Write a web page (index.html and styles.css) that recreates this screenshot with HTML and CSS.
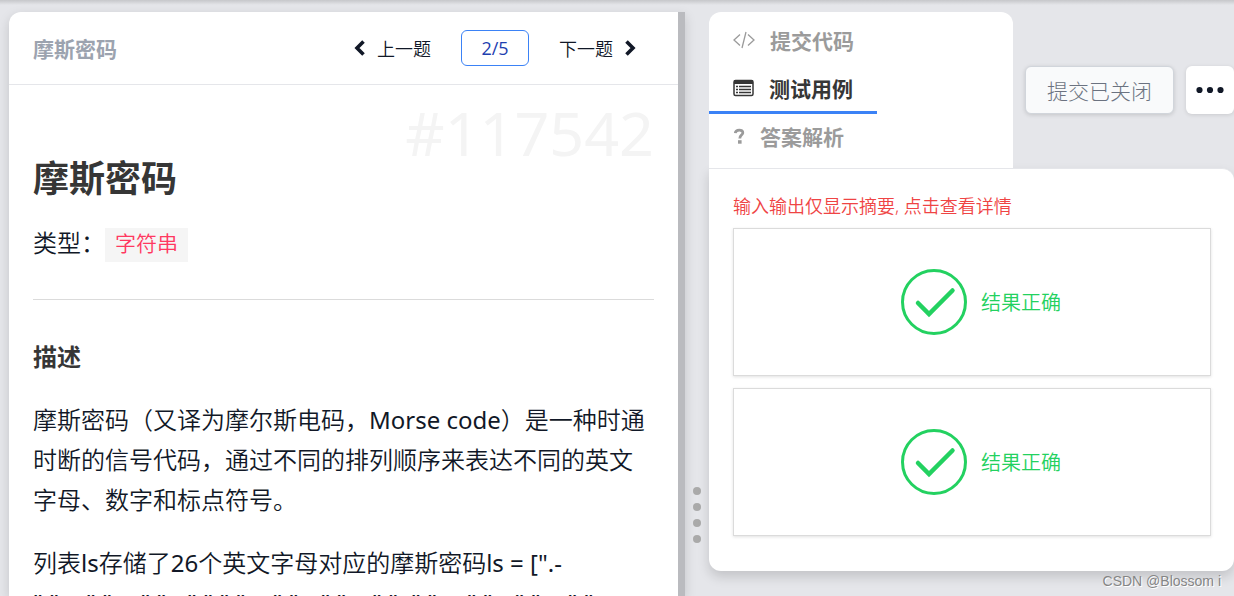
FILE: index.html
```html
<!DOCTYPE html>
<html lang="zh-CN">
<head>
<meta charset="utf-8">
<meta name="viewport" content="width=device-width, initial-scale=1">
<title>摩斯密码</title>
<link rel="stylesheet" href="styles.css">
</head>
<body>
<div class="workspace">
  <section class="problem">
    <header class="problem-bar">
      <span class="problem-name">摩斯密码</span>
      <nav class="pager">
        <button class="pager-link" type="button">
          <svg width="11" height="16" viewBox="0 0 11 16"><path d="M9.500 1.500 3 8l6.500 6.500" fill="none" stroke="currentColor" stroke-width="3.600"/></svg>
          上一题
        </button>
        <button class="pager-count" type="button">2/5</button>
        <button class="pager-link" type="button">
          下一题
          <svg width="11" height="16" viewBox="0 0 11 16"><path d="M1.500 1.500 8 8l-6.500 6.500" fill="none" stroke="currentColor" stroke-width="3.600"/></svg>
        </button>
      </nav>
    </header>
    <article class="problem-body">
      <span class="problem-id">#117542</span>
      <h1 class="title">摩斯密码</h1>
      <div class="meta"><span class="meta-label">类型：</span><span class="tag">字符串</span></div>
      <hr class="rule">
      <h2 class="subtitle">描述</h2>
      <p class="text">摩斯密码（又译为摩尔斯电码，Morse code）是一种时通时断的信号代码，通过不同的排列顺序来表达不同的英文字母、数字和标点符号。</p>
      <p class="text">列表ls存储了26个英文字母对应的摩斯密码ls = [".-<wbr>","-...","-.-.","-..",".","..-.","--.","....","..",".---","-.-",".-..","</p>
    </article>
  </section>
  <div class="splitter"><i class="dot"></i><i class="dot"></i><i class="dot"></i><i class="dot"></i></div>
  <section class="results">
    <div class="toolbar">
      <div class="tabs" role="tablist">
        <button class="tab" type="button" role="tab">
          <svg width="22" height="18" viewBox="0 0 22 18" fill="none" stroke="currentColor" stroke-width="1.300"><path d="M7 3.500 1 9l6 5.500M15 3.500 21 9l-6 5.500M13 1 9 17"/></svg>
          提交代码
        </button>
        <button class="tab tab-active" type="button" role="tab" aria-selected="true">
          <svg width="21" height="18" viewBox="0 0 21 18"><rect x="1" y="1.500" width="19" height="15" rx="1.500" fill="none" stroke="currentColor" stroke-width="1.500"/><path d="M1 1.500h19v3.500H1z" fill="currentColor"/><path d="M3 7.500h2M3 10.500h2M3 13.500h2M6 7.500h12M6 10.500h12M6 13.500h12" stroke="currentColor" stroke-width="1.400"/></svg>
          测试用例
        </button>
        <button class="tab" type="button" role="tab">
          <svg width="12" height="18" viewBox="0 0 12 18"><path d="M2.300 6.200C2.600 2 10.200 2.200 9.800 5.800 9.500 8.300 6.800 8 6.800 11.600" fill="none" stroke="currentColor" stroke-width="2.800"/><path d="M5 13.200h3.600v3.500H5z" fill="currentColor"/></svg>
          答案解析
        </button>
      </div>
      <div class="actions">
        <button class="submit" type="button" disabled>提交已关闭</button>
        <button class="more" type="button" aria-label="更多"><svg width="28" height="8" viewBox="0 0 28 8" fill="currentColor"><circle cx="3.500" cy="4" r="3.100"/><circle cx="14" cy="4" r="3.100"/><circle cx="24.500" cy="4" r="3.100"/></svg></button>
      </div>
    </div>
    <div class="cases">
      <p class="hint">输入输出仅显示摘要, 点击查看详情</p>
      <button class="case" type="button">
        <svg width="66" height="66" viewBox="0 0 66 66" fill="none" stroke="currentColor"><circle cx="33" cy="33" r="31.500" stroke-width="3"/><path d="M17 34 28 45 51.500 21.500" stroke-width="4.500" stroke-linecap="round"/></svg>
        <span class="verdict">结果正确</span>
      </button>
      <button class="case" type="button">
        <svg width="66" height="66" viewBox="0 0 66 66" fill="none" stroke="currentColor"><circle cx="33" cy="33" r="31.500" stroke-width="3"/><path d="M17 34 28 45 51.500 21.500" stroke-width="4.500" stroke-linecap="round"/></svg>
        <span class="verdict">结果正确</span>
      </button>
    </div>
  </section>
</div>
<span class="watermark">CSDN @Blossom i</span>
</body>
</html>
```
FILE: styles.css
```css
* { box-sizing: border-box; }

body {
  margin: 0;
  height: 100vh;
  overflow: hidden;
  position: relative;
  background: #e5e6ea linear-gradient(#c6c7ca, #e5e6ea) no-repeat 0 0 / 100% 5px;
  color: #111827;
  font-family: "Noto Sans", "Noto Sans CJK SC", sans-serif;
}

button {
  padding: 0;
  border: 0;
  background: none;
  color: inherit;
  font: inherit;
}

svg { display: block; flex: none; }

.workspace {
  display: grid;
  grid-template-columns: 676fr 24px 525fr;
  grid-template-rows: 100%;
  height: 100%;
  padding: 12px 0 0 9px;
}

.problem {
  min-width: 0;
  background: #fff;
  border-right: 7px solid #babbbf;
  border-radius: 12px 0 0 0;
  box-shadow: 0 4px 12px rgba(0, 0, 0, 0.15);
}

.problem-bar {
  display: flex;
  align-items: center;
  justify-content: space-between;
  height: 73px;
  padding: 0 42px 0 24px;
  border-bottom: 1px solid #e5e6ea;
}

.problem-name {
  color: #9ca3af;
  font-size: 21px;
  font-weight: 700;
}

.pager {
  display: flex;
  align-items: center;
  gap: 30px;
  font-size: 18px;
  font-weight: 350;
}

.pager-link {
  display: flex;
  align-items: center;
  gap: 12px;
}

.pager-count {
  width: 68px;
  height: 36px;
  border: 1px solid #3b82f6;
  border-radius: 6px;
  color: #1e40af;
  font-family: "Open Sans", sans-serif;
  font-weight: 400;
}

.problem-body {
  position: relative;
  padding: 68px 24px 0;
}

.problem-id {
  position: absolute;
  top: 6px;
  right: 24px;
  color: #f4f4f4;
  font-size: 61px;
  line-height: 84px;
}

.title {
  position: relative;
  margin: 0;
  color: #363636;
  font-size: 36px;
  line-height: 52px;
}

.meta {
  display: flex;
  align-items: flex-start;
  height: 40px;
  margin-top: 20px;
  font-size: 24px;
  font-weight: 350;
}

.meta-label { line-height: 36px; }

.tag {
  align-self: center;
  padding: 0 10px 4px;
  background: #f5f5f5;
  color: #ff3860;
  font-size: 21px;
  line-height: 30px;
}

.rule {
  height: 1px;
  margin: 34px 0 37px;
  border: 0;
  background: #dbdbdb;
}

.subtitle {
  margin: 0;
  color: #363636;
  font-size: 24px;
  line-height: 40px;
}

.text {
  margin: 23px 0 0;
  font-family: "Noto Sans", "Noto Sans CJK SC DemiLight", "Noto Sans CJK SC", sans-serif;
  font-size: 24px;
  line-height: 40px;
}

.splitter {
  display: flex;
  flex-direction: column;
  align-items: center;
  justify-content: flex-end;
  gap: 8px;
  padding-bottom: 53px;
}

.dot {
  width: 8px;
  height: 8px;
  border-radius: 50%;
  background: #aaa;
}

.results { min-width: 0; }

.toolbar {
  display: flex;
  align-items: center;
  justify-content: space-between;
}

.tabs {
  display: flex;
  flex-direction: column;
  align-items: flex-start;
  width: 304px;
  padding: 6px 0;
  background: #fff;
  border-radius: 12px 12px 0 0;
}

.tab {
  display: flex;
  align-items: center;
  gap: 15px;
  height: 48px;
  padding: 0 24px 2px;
  border-bottom: 3px solid transparent;
  color: #9b9b9b;
  font-size: 21px;
  font-weight: 700;
}

.tab-active {
  border-color: #3b82f6;
  color: #363636;
}

.actions {
  display: flex;
  gap: 12px;
}

.submit {
  width: 149px;
  height: 48px;
  border: 1px solid #d1d5db;
  border-radius: 6px;
  background: #f9fafb;
  box-shadow: 0 1px 4px rgba(0, 0, 0, 0.15);
  color: #6b7280;
  font-size: 21px;
  font-weight: 300;
}

.more {
  display: flex;
  align-items: center;
  justify-content: center;
  width: 48px;
  height: 48px;
  border-radius: 6px;
  background: #fff;
  box-shadow: 0 1px 4px rgba(0, 0, 0, 0.12);
}

.cases {
  display: flex;
  flex-direction: column;
  gap: 12px;
  padding: 24px 23px 35px 24px;
  border-top: 1px solid #e5e6ea;
  border-radius: 0 12px 12px 12px;
  background: #fff;
  box-shadow: 0 6px 12px rgba(0, 0, 0, 0.15);
}

.hint {
  margin: 0 0 -4px;
  color: #ef4444;
  font-size: 18px;
  font-weight: 350;
  line-height: 27px;
}

.case {
  display: flex;
  align-items: center;
  justify-content: center;
  gap: 14px;
  height: 148px;
  padding-left: 18px;
  border: 1px solid #dbdbdb;
  box-shadow: 0 1px 3px rgba(0, 0, 0, 0.12);
  color: #23d160;
  font-size: 20px;
  font-weight: 350;
}

.verdict { padding-bottom: 2px; }

.watermark {
  position: absolute;
  right: 13px;
  bottom: 6px;
  color: #858585;
  font-family: "Liberation Sans", Arial, sans-serif;
  font-size: 14px;
  line-height: 18px;
  text-shadow: 1px 1px 0 #fff;
}
```
